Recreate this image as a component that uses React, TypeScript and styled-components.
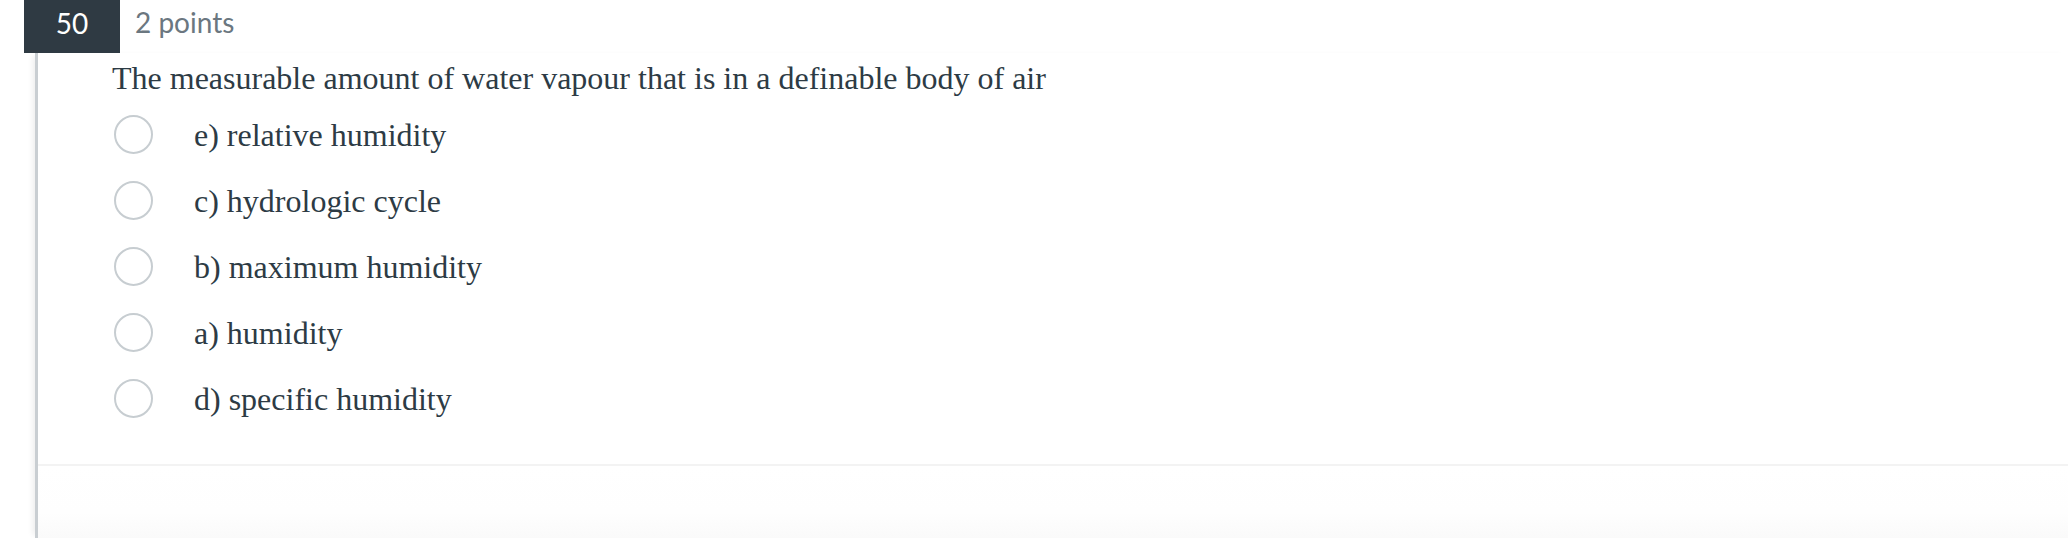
import styled, { createGlobalStyle } from "styled-components";

const GlobalStyle = createGlobalStyle`
body {
    margin: 0;
    background: #ffffff;
    font-family: "Liberation Serif", "Times New Roman", serif;
    color: #2d3b45;
}
`;

const Page = styled.div`
position: relative;
padding-left: 24px;
height: 538px;
overflow: hidden;
`;

const Header = styled.div`
display: flex;
align-items: flex-start;
height: 53px;
`;

const Badge = styled.div`
box-sizing: border-box;
width: 96px;
height: 53px;
padding-bottom: 8px;
background-color: #2f3a43;
color: #ffffff;
font-family: Lato, "Liberation Sans", sans-serif;
font-size: 28px;
display: flex;
align-items: center;
justify-content: center;
`;

const Points = styled.span`
margin-left: 15px;
padding-top: 5px;
font-family: Lato, "Liberation Sans", sans-serif;
font-size: 28px;
line-height: 34px;
color: #6b7780;
`;

const Card = styled.div`
margin-left: 11px;
border-left: 3px solid #c9ced2;
box-shadow: -5px 0 6px -3px rgba(0, 0, 0, 0.08);
height: calc(538px - 53px);
`;

const QuestionText = styled.div`
padding: 6px 0 0 74px;
font-size: 32px;
line-height: 38px;
`;

const Answers = styled.div`
display: flex;
flex-direction: column;
padding: 4px 0 33px 76px;
border-bottom: 2px solid #f3f3f3;
`;

const Answer = styled.label`
display: flex;
align-items: center;
height: 66px;
font-size: 32px;
line-height: 38px;
cursor: pointer;
`;

const Radio = styled.span`
box-sizing: border-box;
width: 39px;
height: 39px;
border-radius: 50%;
border: 2px solid #c7cdd1;
background: #ffffff;
flex-shrink: 0;
`;

const AnswerText = styled.span`
margin-left: 41px;
position: relative;
top: 1px;
`;

const Footer = styled.div`
height: 72px;
background: linear-gradient(to bottom, #ffffff 0%, #fefefe 65%, #fafafa 100%);
`;

const answers = [
    "e) relative humidity",
    "c) hydrologic cycle",
    "b) maximum humidity",
    "a) humidity",
    "d) specific humidity",
];

const App = (): JSX.Element => {
    return (<Page>
        <GlobalStyle />
        <Header>
            <Badge>50</Badge>
            <Points>2 points</Points>
        </Header>
        <Card>
            <QuestionText>The measurable amount of water vapour that is in a definable body of air</QuestionText>
            <Answers>
                {answers.map((text, index) => (
                    <Answer key={index}>
                        <Radio />
                        <AnswerText>{text}</AnswerText>
                    </Answer>
                ))}
            </Answers>
            <Footer />
        </Card>
    </Page>);
};

export default App;
